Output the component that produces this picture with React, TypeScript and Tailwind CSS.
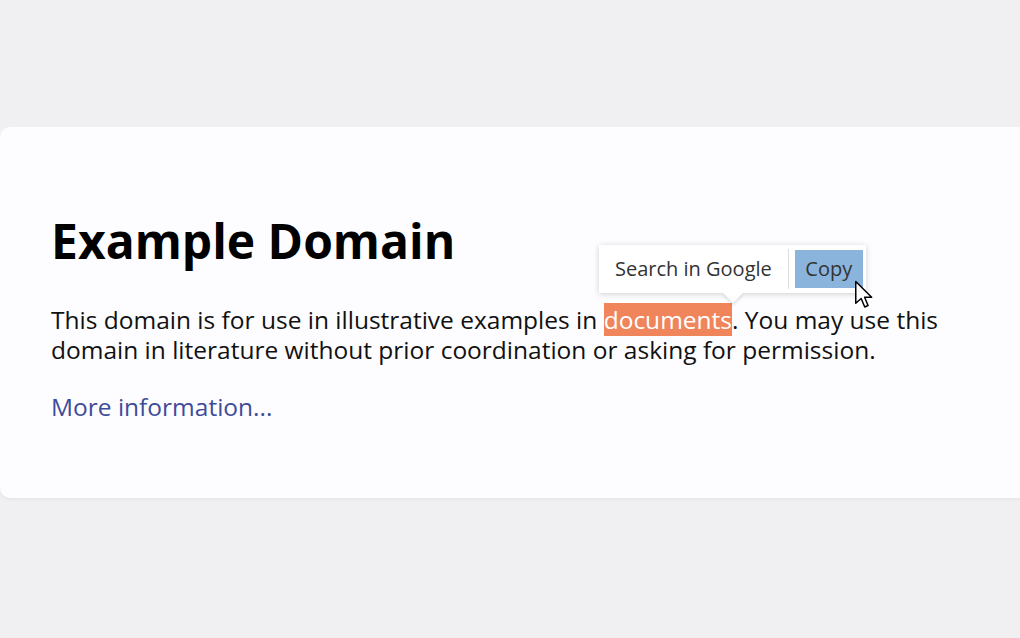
export default function App() {
  return (
    <div className="h-[638px] w-full overflow-hidden bg-[#f0f0f2] pt-[127px] font-['Open_Sans',sans-serif]">
      <div className="relative h-[371px] w-[1060px] rounded-[10px] bg-[#fdfdff] pl-[51px] pt-[90px] shadow-[0_2px_3px_rgba(0,0,0,0.04)]">
        <h1 className="text-[48px] font-bold leading-[48px] text-black">Example Domain</h1>
        <p className="mt-[40px] text-[24.5px] leading-[30px] text-[#111]">
          This domain is for use in illustrative examples in{" "}
          <span className="bg-[#f0845a] text-white">documents</span>. You may use this
          <br />
          domain in literature without prior coordination or asking for permission.
        </p>
        <p className="mt-[27px] text-[24.5px] leading-[30px]">
          <a href="#" className="text-[#3f4c98]">
            More information...
          </a>
        </p>

        {/* selection popup */}
        <div className="absolute left-[599px] top-[118px] flex h-[48px] w-[267px] items-center bg-white pr-[3px] shadow-[0_1px_6px_rgba(0,0,0,0.18)]">
          <div className="absolute left-[127px] top-[41px] h-[14px] w-[14px] rotate-45 bg-white shadow-[2px_2px_3px_rgba(0,0,0,0.1)]" />
          <span className="relative whitespace-nowrap pl-[16px] pr-[16px] text-[20px] text-[#333]">Search in Google</span>
          <div className="relative h-[40px] w-px shrink-0 bg-[#ddd]" />
          <button className="relative ml-[6px] h-[38px] w-[68px] shrink-0 bg-[#8ab4dc] text-[20px] text-[#333]">
            Copy
          </button>
        </div>

        {/* mouse cursor */}
        <svg
          className="absolute left-[854px] top-[153px]"
          width="20"
          height="30"
          viewBox="0 0 13 20"
        >
          <path
            d="M1 1 L1 15.5 L4.6 12.3 L7 18 L9.2 17 L6.9 11.5 L11.6 11.5 Z"
            fill="#fff"
            stroke="#000"
            strokeWidth="1"
            strokeLinejoin="round"
          />
        </svg>
      </div>
    </div>
  );
}
